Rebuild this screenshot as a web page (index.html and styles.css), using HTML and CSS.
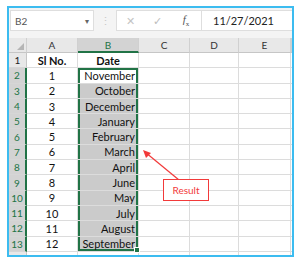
FILE: index.html
```html
<!DOCTYPE html>
<html lang="en">
<head>
    <meta charset="UTF-8">
    <title>Month sort result</title>
    <link rel="stylesheet" href="styles.css">
</head>
<body>

<div class="frame">
    <!-- Formula bar -->
    <div class="fbar">
        <div class="namebox"><span>B2</span><span class="caret">&#9662;</span></div>
        <span class="dots">&#8942;</span>
        <div class="fx-area">
            <span class="btn">&#10005;</span>
            <span class="btn ok">&#10003;</span>
            <span class="btn fx"><i>f</i><sub>x</sub></span>
            <div class="formula">11/27/2021</div>
        </div>
    </div>

    <!-- Sheet grid -->
    <div class="sheet">
        <div class="hd corner"><span class="tri"></span></div>
        <div class="hd">A</div>
        <div class="hd hd-sel">B</div>
        <div class="hd">C</div>
        <div class="hd">D</div>
        <div class="hd">E</div>
        <div class="hd"></div>

        <div class="rn">1</div>
        <div class="c num bold">Sl No.</div>
        <div class="c num bold">Date</div>
        <div class="c"></div><div class="c"></div><div class="c"></div><div class="c last"></div>

        <div class="rn rn-sel">2</div>
        <div class="c num">1</div>
        <div class="c mon active">November</div>
        <div class="c"></div><div class="c"></div><div class="c"></div><div class="c last"></div>

        <div class="rn rn-sel">3</div>
        <div class="c num">2</div>
        <div class="c mon sel">October</div>
        <div class="c"></div><div class="c"></div><div class="c"></div><div class="c last"></div>

        <div class="rn rn-sel">4</div>
        <div class="c num">3</div>
        <div class="c mon sel">December</div>
        <div class="c"></div><div class="c"></div><div class="c"></div><div class="c last"></div>

        <div class="rn rn-sel">5</div>
        <div class="c num">4</div>
        <div class="c mon sel">January</div>
        <div class="c"></div><div class="c"></div><div class="c"></div><div class="c last"></div>

        <div class="rn rn-sel">6</div>
        <div class="c num">5</div>
        <div class="c mon sel">February</div>
        <div class="c"></div><div class="c"></div><div class="c"></div><div class="c last"></div>

        <div class="rn rn-sel">7</div>
        <div class="c num">6</div>
        <div class="c mon sel">March</div>
        <div class="c"></div><div class="c"></div><div class="c"></div><div class="c last"></div>

        <div class="rn rn-sel">8</div>
        <div class="c num">7</div>
        <div class="c mon sel">April</div>
        <div class="c"></div><div class="c"></div><div class="c"></div><div class="c last"></div>

        <div class="rn rn-sel">9</div>
        <div class="c num">8</div>
        <div class="c mon sel">June</div>
        <div class="c"></div><div class="c"></div><div class="c"></div><div class="c last"></div>

        <div class="rn rn-sel">10</div>
        <div class="c num">9</div>
        <div class="c mon sel">May</div>
        <div class="c"></div><div class="c"></div><div class="c"></div><div class="c last"></div>

        <div class="rn rn-sel">11</div>
        <div class="c num">10</div>
        <div class="c mon sel">July</div>
        <div class="c"></div><div class="c"></div><div class="c"></div><div class="c last"></div>

        <div class="rn rn-sel">12</div>
        <div class="c num">11</div>
        <div class="c mon sel">August</div>
        <div class="c"></div><div class="c"></div><div class="c"></div><div class="c last"></div>

        <div class="rn rn-sel">13</div>
        <div class="c num">12</div>
        <div class="c mon sel end">September<span class="handle"></span></div>
        <div class="c"></div><div class="c"></div><div class="c"></div><div class="c last"></div>

        <div class="rn"></div>
        <div class="c"></div><div class="c"></div><div class="c"></div><div class="c"></div><div class="c"></div><div class="c last"></div>

        <!-- Callout over the grid -->
        <svg class="arrow" width="50" height="40" viewBox="0 0 50 40">
            <line x1="3" y1="2" x2="37" y2="30" stroke="#f23a3a" stroke-width="1.2"/>
            <polygon points="1,0 9,3 4,8" fill="#f23a3a"/>
        </svg>
        <div class="callout">Result</div>
    </div>
</div>

</body>
</html>
```

FILE: styles.css
```css
body {
    margin: 0;
    background: white;
    font-family: Lato, "Liberation Sans", sans-serif;
}
.frame {
    margin: 6px 0 0 7px;
    width: 287px;
    height: 251px;
    box-sizing: border-box;
    border: 2px solid #3cbcf0;
    background: #f4f4f4;
    overflow: hidden;
}

/* Formula bar */
.fbar {
    height: 30px;
    display: flex;
    align-items: flex-start;
    padding-top: 2px;
    box-sizing: border-box;
}
.namebox {
    width: 84px;
    height: 21px;
    margin-left: 1px;
    background: white;
    border: 1px solid #dedede;
    box-sizing: border-box;
    display: flex;
    align-items: center;
    justify-content: space-between;
    padding: 0 4px 0 4px;
    font-size: 10px;
    color: #555;
}
.caret {
    font-size: 8px;
    color: #666;
}
.dots {
    width: 22px;
    text-align: center;
    font-size: 11px;
    line-height: 21px;
    color: #c8c8c8;
}
.fx-area {
    flex: 1;
    height: 21px;
    background: white;
    border: 1px solid #dedede;
    border-right: none;
    box-sizing: border-box;
    display: flex;
    align-items: center;
}
.btn {
    width: 27px;
    text-align: center;
    color: #c4c4c4;
    font-size: 11px;
}
.btn.ok {
    color: #bdbdbd;
}
.btn.fx {
    color: #555;
    font-family: "Liberation Serif", serif;
    font-size: 11px;
    width: 30px;
}
.btn.fx sub {
    font-size: 7px;
}
.formula {
    flex: 1;
    height: 100%;
    border-left: 1px solid #dedede;
    padding-left: 11px;
    font-size: 11px;
    line-height: 19px;
    color: #222;
}

/* Sheet */
.sheet {
    position: relative;
    display: grid;
    grid-template-columns: 18px 51px 61px 51px 49px 52px 1fr;
    grid-template-rows: 15px repeat(13, 15.3px) 12px;
    background: white;
    font-size: 11px;
    color: #111;
}
.hd {
    background: #e8e8e8;
    border-right: 1px solid #d0d0d0;
    border-bottom: 1px solid #c6c6c6;
    display: flex;
    align-items: center;
    justify-content: center;
    font-size: 10px;
    color: #333;
}
.hd-sel {
    background: #d3d3d3;
    color: #217346;
    border-bottom: 2px solid #217346;
}
.corner {
    position: relative;
}
.tri {
    position: absolute;
    right: 2px;
    bottom: 2px;
    width: 0;
    height: 0;
    border-left: 7px solid transparent;
    border-bottom: 7px solid #b5b5b5;
}
.rn {
    background: #e8e8e8;
    border-right: 1px solid #c6c6c6;
    border-bottom: 1px solid #d6d6d6;
    display: flex;
    align-items: center;
    justify-content: center;
    font-size: 10px;
    color: #222;
}
.rn-sel {
    background: #d3d3d3;
    color: #217346;
    border-right: 2px solid #217346;
}
.c {
    border-right: 1px solid #dcdcdc;
    border-bottom: 1px solid #dcdcdc;
    display: flex;
    align-items: center;
    overflow: hidden;
    white-space: nowrap;
}
.c.last {
    border-right: none;
}
.num {
    justify-content: center;
}
.bold {
    font-weight: bold;
}
.mon {
    justify-content: flex-end;
    padding-right: 3px;
    position: relative;
    box-shadow: inset 2px 0 #217346, inset -2px 0 #217346;
}
.mon.active {
    box-shadow: inset 2px 0 #217346, inset -2px 0 #217346, inset 0 2px #217346;
}
.mon.sel {
    background: #cbcbcb;
}
.mon.end {
    overflow: visible;
    box-shadow: inset 2px 0 #217346, inset -2px 0 #217346, inset 0 -2px #217346;
}
.handle {
    position: absolute;
    right: -2px;
    bottom: -2px;
    width: 4px;
    height: 4px;
    background: #217346;
    border: 1px solid white;
}

/* Callout */
.arrow {
    position: absolute;
    left: 133px;
    top: 112px;
}
.callout {
    position: absolute;
    left: 154px;
    top: 141px;
    width: 46px;
    height: 22px;
    box-sizing: border-box;
    border: 1px solid #f23a3a;
    background: white;
    color: #f23a3a;
    font-size: 10px;
    display: flex;
    align-items: center;
    justify-content: center;
}
```
